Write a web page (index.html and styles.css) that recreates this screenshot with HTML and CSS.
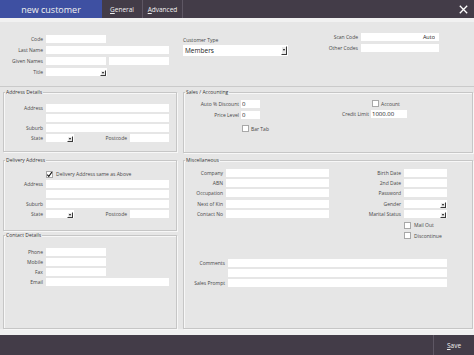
FILE: index.html
```html
<!DOCTYPE html>
<html lang="en">
<head>
  <meta charset="UTF-8">
  <title>new customer</title>
  <link rel="stylesheet" href="styles.css">
</head>
<body>
<div class="app">
  <header class="topbar">
    <div class="title">new customer</div>
    <div class="tab tab-general"><u>G</u>eneral</div>
    <div class="tab tab-advanced"><u>A</u>dvanced</div>
    <div class="spacer"></div>
    <div class="close">
      <svg width="9" height="9" viewBox="0 0 9 9"><path d="M0.8 0.8 L8.2 8.2 M8.2 0.8 L0.8 8.2" stroke="#fff" stroke-width="1.3"/></svg>
    </div>
  </header>

  <main class="body">
    <section class="head">
      <div class="ident rows r11">
        <div class="row"><span class="lbl w43">Code</span><input class="fld w60"></div>
        <div class="row"><span class="lbl w43">Last Name</span><input class="fld w123"></div>
        <div class="row"><span class="lbl w43">Given Names</span><input class="fld w60"><input class="fld w60"></div>
        <div class="row"><span class="lbl w43">Title</span><div class="sel w61"><span class="arrow"></span></div></div>
      </div>
      <div class="ctype">
        <div class="cap">Customer Type</div>
        <div class="sel sel-big"><span class="val">Members</span><span class="arrow"></span></div>
      </div>
      <div class="codes rows r11">
        <div class="row"><span class="lbl w40">Scan Code</span><input class="fld w78 txt-right" value="Auto"></div>
        <div class="row"><span class="lbl w40">Other Codes</span><input class="fld w78"></div>
      </div>
    </section>

    <div class="groups">
      <div class="col-left">
        <fieldset class="grp g-address">
          <legend>Address Details</legend>
          <div class="rows">
            <div class="row"><span class="lbl w39">Address</span><input class="fld w123"></div>
            <div class="row"><span class="lbl w39"></span><input class="fld w123"></div>
            <div class="row"><span class="lbl w39">Suburb</span><input class="fld w123"></div>
            <div class="row"><span class="lbl w39">State</span><div class="sel w28"><span class="arrow"></span></div><span class="lbl w50">Postcode</span><input class="fld w39"></div>
          </div>
        </fieldset>

        <fieldset class="grp g-delivery">
          <legend>Delivery Address</legend>
          <div class="rows">
            <div class="row ind42"><span class="chk on"><svg width="7" height="7" viewBox="0 0 7 7"><path d="M1.3 3.6 L2.8 5.3 L5.9 1.2" stroke="#111" stroke-width="1.1" fill="none"/></svg></span><span class="lbl">Delivery Address same as Above</span></div>
            <div class="row"><span class="lbl w39">Address</span><input class="fld w123"></div>
            <div class="row"><span class="lbl w39"></span><input class="fld w123"></div>
            <div class="row"><span class="lbl w39">Suburb</span><input class="fld w123"></div>
            <div class="row"><span class="lbl w39">State</span><div class="sel w28"><span class="arrow"></span></div><span class="lbl w50">Postcode</span><input class="fld w39"></div>
          </div>
        </fieldset>

        <fieldset class="grp g-contact">
          <legend>Contact Details</legend>
          <div class="rows">
            <div class="row"><span class="lbl w39">Phone</span><input class="fld w60"></div>
            <div class="row"><span class="lbl w39">Mobile</span><input class="fld w60"></div>
            <div class="row"><span class="lbl w39">Fax</span><input class="fld w60"></div>
            <div class="row"><span class="lbl w39">Email</span><input class="fld w123"></div>
          </div>
        </fieldset>
      </div>

      <div class="col-right">
        <fieldset class="grp g-sales">
          <legend>Sales / Accounting</legend>
          <div class="split">
            <div class="rows sales-left">
              <div class="row"><span class="lbl w55">Auto % Discount</span><input class="fld w19 val6" value="0"></div>
              <div class="row"><span class="lbl w55">Price Level</span><input class="fld w19 val6" value="0"></div>
              <div class="row ind58 bartab"><span class="chk"></span><span class="lbl">Bar Tab</span></div>
            </div>
            <div class="rows sales-right">
              <div class="row ind42"><span class="chk"></span><span class="lbl">Account</span></div>
              <div class="row"><span class="lbl w39">Credit Limit</span><input class="fld w36 val6" value="1000.00"></div>
            </div>
          </div>
        </fieldset>

        <fieldset class="grp g-misc">
          <legend>Miscellaneous</legend>
          <div class="split">
            <div class="rows misc-left">
              <div class="row"><span class="lbl w39">Company</span><input class="fld w103"></div>
              <div class="row"><span class="lbl w39">ABN</span><input class="fld w103"></div>
              <div class="row"><span class="lbl w39">Occupation</span><input class="fld w103"></div>
              <div class="row"><span class="lbl w39">Next of Kin</span><input class="fld w103"></div>
              <div class="row"><span class="lbl w39">Contact No</span><input class="fld w103"></div>
            </div>
            <div class="rows misc-right">
              <div class="row"><span class="lbl w51">Birth Date</span><input class="fld w43"></div>
              <div class="row"><span class="lbl w51">2nd Date</span><input class="fld w43"></div>
              <div class="row"><span class="lbl w51">Password</span><input class="fld w43"></div>
              <div class="row"><span class="lbl w51">Gender</span><div class="sel w43"><span class="arrow"></span></div></div>
              <div class="row"><span class="lbl w51">Marital Status</span><div class="sel w43"><span class="arrow"></span></div></div>
              <div class="row ind54 mail"><span class="chk"></span><span class="lbl">Mail Out</span></div>
              <div class="row ind54"><span class="chk"></span><span class="lbl">Discontinue</span></div>
            </div>
          </div>
          <div class="rows comments">
            <div class="row"><span class="lbl w41">Comments</span><input class="fld w219"></div>
            <div class="row"><span class="lbl w41"></span><input class="fld w219"></div>
            <div class="row"><span class="lbl w41">Sales Prompt</span><input class="fld w219"></div>
          </div>
        </fieldset>
      </div>
    </div>
  </main>

  <footer class="bottombar">
    <div class="save"><u>S</u>ave</div>
  </footer>
</div>
</body>
</html>
```

FILE: styles.css
```css
* {
  box-sizing: border-box;
}
body {
  margin: 0;
  font-family: "Open Sans", "Noto Sans", sans-serif;
  background: #e6e6e6;
  color: #474747;
}
.app {
  width: 474px;
  height: 355px;
  display: flex;
  flex-direction: column;
}

/* top bar */
.topbar {
  height: 18px;
  flex-shrink: 0;
  display: flex;
  background: #433c48;
  color: #f0f0f0;
}
.title {
  width: 102px;
  background: #3e50a2;
  font-size: 9px;
  display: flex;
  align-items: center;
  justify-content: center;
}
.tab {
  font-size: 6.5px;
  display: flex;
  align-items: center;
  justify-content: center;
  border-right: 1px solid #5e5764;
}
.tab-general { width: 41px; }
.tab-advanced { width: 40px; }
.spacer { flex: 1; }
.close {
  width: 22px;
  display: flex;
  align-items: center;
  justify-content: center;
}

/* body */
.body {
  flex: 1;
  border-top: 4px solid #f1f1f1;
  border-bottom: 6px solid #f0f0f0;
  display: flex;
  flex-direction: column;
}
.head {
  height: 65px;
  flex-shrink: 0;
  display: flex;
  align-items: flex-start;
  border-bottom: 1px solid #cacaca;
}
.rows {
  display: flex;
  flex-direction: column;
  gap: 2px;
}
.rows.r11 { gap: 3px; }
.row {
  display: flex;
  align-items: center;
  gap: 3px;
  height: 8px;
}
.lbl {
  font-size: 5px;
  line-height: 8px;
  white-space: nowrap;
  text-align: right;
  flex-shrink: 0;
}
.fld {
  height: 8px;
  border: 0;
  margin: 0;
  padding: 0 1px;
  background: #fff;
  font-family: inherit;
  font-size: 5.5px;
  color: #222;
  outline: none;
  flex-shrink: 0;
}
.fld.txt-right { text-align: right; padding-right: 4px; }
.fld.val6 { font-size: 6px; }

.w19 { width: 19px; }
.w28 { width: 28px; }
.w36 { width: 36px; }
.w39 { width: 39px; }
.w40 { width: 40px; }
.w41 { width: 41px; }
.w43 { width: 43px; }
.w50 { width: 50px; }
.w51 { width: 51px; }
.w55 { width: 55px; }
.w60 { width: 60px; }
.w61 { width: 61px; }
.w78 { width: 78px; }
.w103 { width: 103px; }
.w123 { width: 123px; }
.w219 { width: 219px; }

.ident { padding-top: 13px; }
.ctype {
  margin-left: 14px;
  padding-top: 15px;
  width: 105px;
}
.cap {
  font-size: 5px;
  line-height: 7px;
}
.codes {
  margin-left: 30px;
  padding-top: 11px;
}

/* fake select */
.sel {
  height: 8px;
  background: #fff;
  display: flex;
  align-items: flex-end;
  justify-content: flex-end;
  padding: 0 1px 0 0;
  flex-shrink: 0;
}
.sel-big {
  width: 105px;
  height: 11.5px;
  margin-top: 0.5px;
  align-items: center;
  padding: 0 1px 0 2px;
}
.sel .val {
  font-size: 6.5px;
  color: #222;
  margin-right: auto;
}
.arrow {
  width: 6px;
  height: 6px;
  background: #e9e9e9;
  border-top: 1px solid #fff;
  border-left: 1px solid #fff;
  border-right: 1px solid #3a3a3a;
  border-bottom: 1px solid #3a3a3a;
  display: flex;
  align-items: center;
  justify-content: center;
}
.arrow::after {
  content: "";
  border-left: 1.5px solid transparent;
  border-right: 1.5px solid transparent;
  border-top: 2px solid #111;
}
.sel-big .arrow {
  width: 6.5px;
  height: 8.5px;
}

/* checkboxes */
.chk {
  width: 7px;
  height: 7px;
  background: #fff;
  border: 1px solid #a8a8a8;
  display: flex;
  flex-shrink: 0;
}
.chk svg { margin: -1px; }
.ind42 { padding-left: 42px; }
.ind54 { padding-left: 54px; }
.ind58 { padding-left: 58px; }

/* groups */
.groups {
  display: flex;
  gap: 6px;
  padding: 2px 1px 0 3px;
}
.col-left {
  width: 174px;
  display: flex;
  flex-direction: column;
}
.col-right {
  width: 290px;
  display: flex;
  flex-direction: column;
}
.grp {
  margin: 0;
  padding: 0;
  min-width: 0;
  border: 1px solid #c6c6c6;
  box-shadow: inset 1px 1px 0 #f7f7f7, 1px 1px 0 #f7f7f7;
}
.grp legend {
  font-size: 5px;
  line-height: 7px;
  padding: 0 1px;
  margin-left: 1px;
  color: #333;
}
.g-address { height: 63px; padding-top: 8px; }
.g-delivery { height: 74px; margin-top: 5px; padding-top: 6px; }
.g-contact { height: 97px; margin-top: 1px; padding-top: 9px; }
.g-sales { height: 64px; padding-top: 3.5px; }
.g-misc { height: 172px; margin-top: 4px; padding-top: 5px; }

.split { display: flex; }
.sales-left { width: 146px; gap: 3px; }
.sales-left .row { gap: 2px; }
.bartab { margin-top: 3px; }
.sales-right .row { gap: 2px; }
.misc-left { width: 166px; gap: 2.2px; }
.misc-right { gap: 2.2px; }
.mail { margin-top: 1.5px; }
.comments {
  margin-top: 19.3px;
  gap: 2.2px;
}

/* bottom bar */
.bottombar {
  height: 20px;
  flex-shrink: 0;
  background: #433c48;
  display: flex;
  justify-content: flex-end;
}
.save {
  width: 41px;
  border-left: 1px solid #5e5764;
  color: #eee;
  font-size: 6.5px;
  display: flex;
  align-items: center;
  justify-content: center;
}
```
